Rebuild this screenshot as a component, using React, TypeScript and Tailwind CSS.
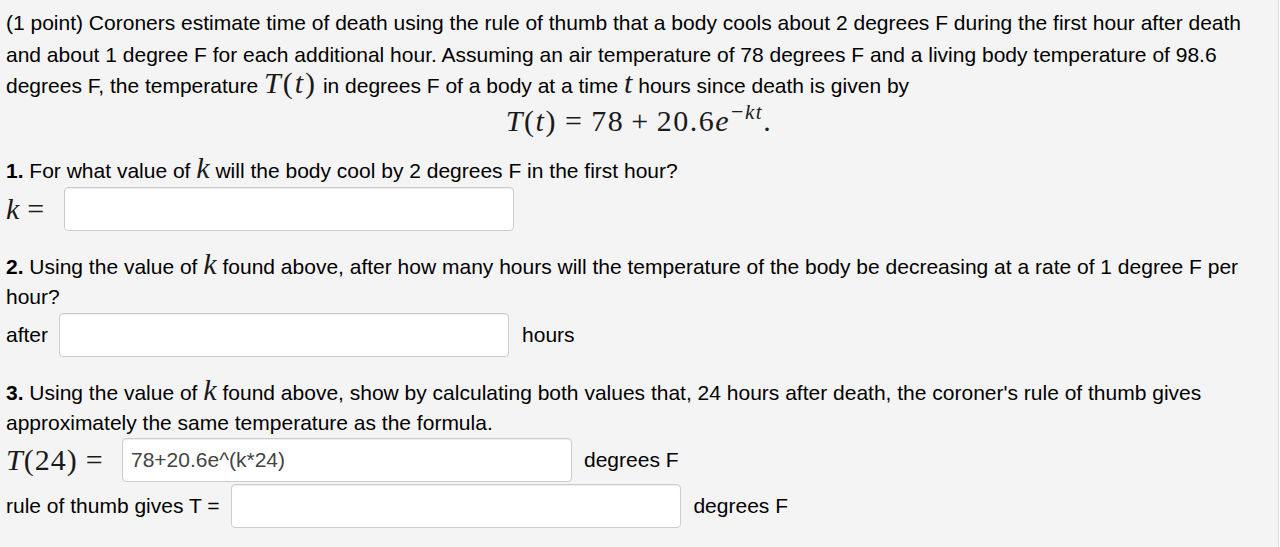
import React from "react";

const serif = "font-['Liberation_Serif','DejaVu_Serif',serif]";

function Mi({ children }: { children: React.ReactNode }) {
  return <span className={`${serif} italic`}>{children}</span>;
}

function Math({ children, className = "" }: { children: React.ReactNode; className?: string }) {
  return (
    <span className={`${serif} text-[30px] leading-[0] text-[#1a1a1a] whitespace-nowrap ${className}`}>
      {children}
    </span>
  );
}

function Eq() {
  return <span className="mx-[8px]">=</span>;
}

function Input({ value = "" }: { value?: string }) {
  return (
    <div className="w-[450px] h-[44px] bg-white border border-[#cccccc] rounded-[4px] shadow-[inset_0_1px_1px_rgba(0,0,0,0.075)] flex items-center px-[8px] text-[21px] text-[#444444] shrink-0">
      {value}
    </div>
  );
}

export default function App() {
  return (
    <div className="w-[1280px] h-[547px] bg-white flex font-['Liberation_Sans',Arial,sans-serif] text-black">
      <div className="w-[1279px] h-full bg-[#f4f4f4] border-r border-[#dddddd] px-[6px] pt-[7px] text-[21px]">
        <p className="leading-[31.5px]">
          (1 point) Coroners estimate time of death using the rule of thumb that a body cools about 2 degrees F during the first hour after death
          <br />
          and about 1 degree F for each additional hour. Assuming an air temperature of 78 degrees F and a living body temperature of 98.6
          <br />
          degrees F, the temperature{" "}
          <Math className="tracking-[2px]">
            <Mi>T</Mi>(<Mi>t</Mi>)
          </Math>{" "}
          in degrees F of a body at a time{" "}
          <Math>
            <Mi>t</Mi>
          </Math>{" "}
          hours since death is given by
        </p>

        <div className="mt-[2px] h-[34px] flex items-center justify-center">
          <Math className="tracking-[1.5px] leading-none">
            <Mi>T</Mi>(<Mi>t</Mi>)<Eq />78<span className="mx-[7px]">+</span>20.6<Mi>e</Mi>
            <span className="text-[21px] align-baseline relative -top-[12px] ml-[1px]">
              <span className="text-[22px]">−</span>
              <Mi>kt</Mi>
            </span>
            .
          </Math>
        </div>

        <p className="mt-[18px] leading-[30px]">
          <b>1.</b> For what value of{" "}
          <Math>
            <Mi>k</Mi>
          </Math>{" "}
          will the body cool by 2 degrees F in the first hour?
        </p>
        <div className="mt-[1px] h-[44px] flex items-center gap-[12px]">
          <Math className="w-[46px] leading-none">
            <Mi>k</Mi>
            <Eq />
          </Math>
          <Input />
        </div>

        <p className="mt-[21px] leading-[30px]">
          <b>2.</b> Using the value of{" "}
          <Math>
            <Mi>k</Mi>
          </Math>{" "}
          found above, after how many hours will the temperature of the body be decreasing at a rate of 1 degree F per
          <br />
          hour?
        </p>
        <div className="mt-[1px] h-[44px] flex items-center gap-[11px]">
          <span>after</span>
          <Input />
          <span className="ml-[2px]">hours</span>
        </div>

        <p className="mt-[21px] leading-[30px]">
          <b>3.</b> Using the value of{" "}
          <Math>
            <Mi>k</Mi>
          </Math>{" "}
          found above, show by calculating both values that, 24 hours after death, the coroner's rule of thumb gives
          <br />
          approximately the same temperature as the formula.
        </p>
        <div className="h-[44px] flex items-center gap-[12px]">
          <Math className="tracking-[1px] w-[104px] leading-none">
            <Mi>T</Mi>(24)
            <Eq />
          </Math>
          <Input value="78+20.6e^(k*24)" />
          <span>degrees F</span>
        </div>
        <div className="mt-[2px] h-[44px] flex items-center gap-[12px]">
          <span>rule of thumb gives T =</span>
          <Input />
          <span>degrees F</span>
        </div>
      </div>
    </div>
  );
}
